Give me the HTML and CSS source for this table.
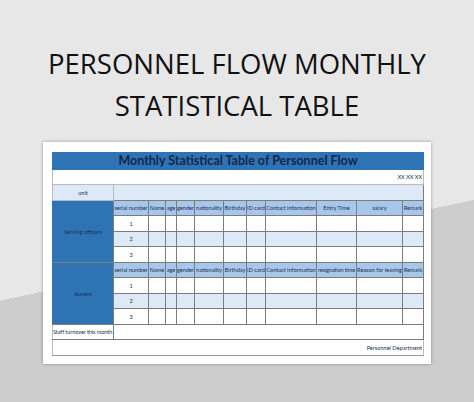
FILE: index.html
```html
<!DOCTYPE html>
<html>
<head>
<meta charset="utf-8">
<link rel="stylesheet" href="styles.css">
</head>
<body>
<h1 class="headline">PERSONNEL FLOW MONTHLY<br>STATISTICAL TABLE</h1>
<div class="card">
<table class="sheet">
<colgroup>
<col style="width:61px"><col style="width:35px"><col style="width:17px"><col style="width:11px"><col style="width:18px"><col style="width:29px"><col style="width:23px"><col style="width:19px"><col style="width:51px"><col style="width:40px"><col style="width:46px"><col style="width:21px">
</colgroup>
<tr class="r-title"><td colspan="12" class="title">Monthly Statistical Table of Personnel Flow</td></tr>
<tr><td colspan="12" class="date">XX XX XX</td></tr>
<tr class="light"><td class="unit">unit</td><td colspan="11"></td></tr>
<tr class="hdr"><td rowspan="4" class="label">Serving officers</td><td>serial number</td><td>Name</td><td>age</td><td>gender</td><td>nationality</td><td>Birthday</td><td>ID card</td><td>Contact information</td><td>Entry Time</td><td>salary</td><td>Remark</td></tr>
<tr><td>1</td><td></td><td></td><td></td><td></td><td></td><td></td><td></td><td></td><td></td><td></td></tr>
<tr class="light"><td>2</td><td></td><td></td><td></td><td></td><td></td><td></td><td></td><td></td><td></td><td></td></tr>
<tr><td>3</td><td></td><td></td><td></td><td></td><td></td><td></td><td></td><td></td><td></td><td></td></tr>
<tr class="hdr"><td rowspan="4" class="label">leavers</td><td>serial number</td><td>Name</td><td>age</td><td>gender</td><td>nationality</td><td>Birthday</td><td>ID card</td><td>Contact information</td><td class="tight">resignation time</td><td>Reason for leaving</td><td>Remark</td></tr>
<tr><td>1</td><td></td><td></td><td></td><td></td><td></td><td></td><td></td><td></td><td></td><td></td></tr>
<tr class="light"><td>2</td><td></td><td></td><td></td><td></td><td></td><td></td><td></td><td></td><td></td><td></td></tr>
<tr><td>3</td><td></td><td></td><td></td><td></td><td></td><td></td><td></td><td></td><td></td><td></td></tr>
<tr><td class="staff">Staff turnover this month</td><td colspan="11"></td></tr>
<tr><td colspan="12" class="dept">Personnel Department</td></tr>
</table>
</div>
</body>
</html>
```
FILE: styles.css
```css
html, body {
  margin: 0;
  padding: 0;
}
body {
  width: 474px;
  height: 402px;
  overflow: hidden;
  background: linear-gradient(168deg, #e7e7e7 59.8%, #cdcdcd 59.8%);
  font-family: "Open Sans", sans-serif;
}
.headline {
  margin: 43px 0 0 0;
  font-family: "Open Sans", sans-serif;
  font-weight: 400;
  font-size: 27.5px;
  line-height: 42px;
  text-align: center;
  color: #111;
}
.card {
  margin: 15px 0 0 43px;
  width: 371px;
  padding: 10px 8px 8px 9px;
  background: #fff;
  box-shadow: 0 0 3px rgba(0, 0, 0, 0.35);
}
.sheet {
  width: 371px;
  border-collapse: collapse;
  table-layout: fixed;
  font-family: "Lato", sans-serif;
  font-size: 5.6px;
  color: #22304f;
}
.sheet td {
  height: 14.5px;
  padding: 0;
  border: 1px solid #7c7c7c;
  text-align: center;
  vertical-align: middle;
  white-space: nowrap;
  overflow: hidden;
  background: #fff;
}
.sheet .r-title td {
  height: 15.6px;
}
.sheet td.title {
  background: #2e74b5;
  color: #14264a;
  font-family: "Lato", sans-serif;
  font-weight: 700;
  font-size: 12.5px;
  border-color: #2e74b5;
}
.sheet td.date {
  text-align: right;
  padding-right: 1px;
  border-color: #bbb;
}
.sheet tr.light td {
  background: #dde9f6;
}
.sheet td.unit {
  background: #dde9f6;
  border-color: #bbb;
}
.sheet tr.hdr td {
  background: #a7c6e8;
  color: #1c2f57;
}
.sheet tr.hdr td.tight {
  letter-spacing: -0.15px;
}
.sheet tr td.label {
  background: #2e74b5;
  color: #1c2f57;
  border-color: #2e74b5 #7c7c7c #7c7c7c #2e74b5;
}
.sheet td.staff {
  text-align: left;
  letter-spacing: -0.1px;
  border-color: #bbb #7c7c7c #7c7c7c #bbb;
}
.sheet td.dept {
  text-align: right;
  padding-right: 1px;
  border-color: #7c7c7c #bbb #999 #bbb;
}
```
